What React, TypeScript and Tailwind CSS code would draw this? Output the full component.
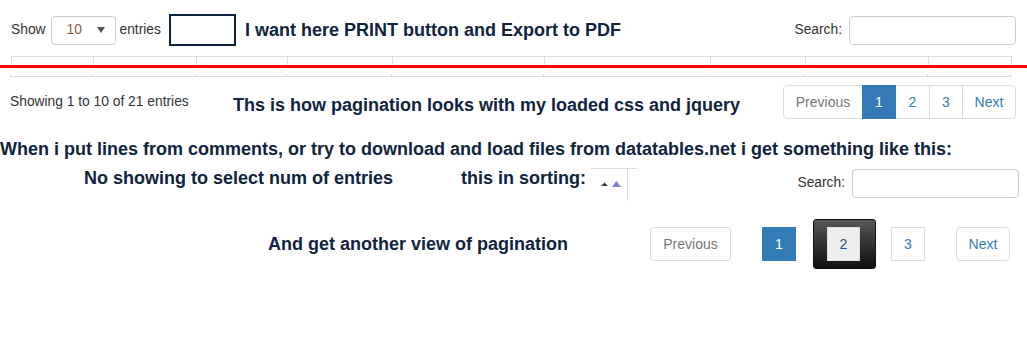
import React from 'react';

const colWidths = [82, 103, 91, 105, 152, 166, 95, 123, 84];

const TopCells = () => (
  <div className="flex px-[11px]">
    {colWidths.map((w, i) => (
      <div
        key={i}
        className={`h-[9px] border-t border-l border-[#dddddd] ${i === colWidths.length - 1 ? 'border-r' : ''}`}
        style={{ width: w }}
      />
    ))}
  </div>
);

const BottomCells = () => (
  <div className="flex px-[10px]">
    {colWidths.map((w, i) => (
      <div
        key={i}
        className={`h-[3px] border-b border-l border-[#dddddd] ${i === colWidths.length - 1 ? 'border-r' : ''}`}
        style={{ width: w }}
      />
    ))}
  </div>
);

const SortIcons = () => (
  <svg width="24" height="8" viewBox="0 0 24 8" className="block">
    <polygon points="1,6 4.5,2.5 8,6" fill="#333333" />
    <polygon points="12,7 16.5,1 21,7" fill="#7f7fe0" />
  </svg>
);

export default function App() {
  return (
    <div
      className="w-[1027px] h-[350px] bg-white text-[#333333] overflow-hidden"
      style={{ fontFamily: '"Liberation Sans", Arial, sans-serif' }}
    >
      {/* first toolbar */}
      <div className="flex items-center h-[32px] mt-[14px] pl-[11px] pr-[11px] text-[13.8px]">
        <span>Show</span>
        <div className="ml-[5px] w-[65px] h-[29px] border border-[#cccccc] rounded-[4px] flex items-center pl-[15px] pr-[5px]">
          <span className="text-[#8a6040]">10</span>
          <svg width="8" height="6" viewBox="0 0 8 6" className="ml-auto mr-[5px]">
            <polygon points="0,0 8,0 4,6" fill="#555555" />
          </svg>
        </div>
        <span className="ml-[4px]">entries</span>
        <div className="ml-[8px] w-[67px] h-[32px] border-2 border-[#0d2340]" />
        <span className="ml-[9px] text-[18px] font-bold text-[#102440] leading-[21px]">
          I want here PRINT button and Export to PDF
        </span>
        <div className="ml-auto flex items-center">
          <span>Search:</span>
          <div className="ml-[7px] w-[167px] h-[29px] border border-[#cccccc] rounded-[4px]" />
        </div>
      </div>

      {/* table head with the red line over it */}
      <div className="mt-[10px]">
        <TopCells />
        <div className="h-[3px] w-full bg-[#ff0000]" />
        <div className="h-[6px]" />
        <BottomCells />
      </div>

      {/* info + bootstrap pagination */}
      <div className="flex items-center h-[34px] mt-[8px] pl-[10px] pr-[11px] text-[13.8px]">
        <span className="w-[223px]">Showing 1 to 10 of 21 entries</span>
        <span className="pt-[6px] text-[18px] font-bold text-[#102440] leading-[21px]">
          Ths is how pagination looks with my loaded css and jquery
        </span>
        <div className="ml-auto flex h-[34px] border border-[#dddddd] rounded-[4px] text-[14px]">
          <div className="w-[78px] flex items-center justify-center text-[#777777]">Previous</div>
          <div className="w-[34px] h-[34px] -my-px flex items-center justify-center bg-[#337ab7] text-white">1</div>
          <div className="w-[33px] flex items-center justify-center text-[#337ab7]">2</div>
          <div className="w-[33px] border-l border-[#dddddd] flex items-center justify-center text-[#337ab7]">3</div>
          <div className="w-[53px] border-l border-[#dddddd] flex items-center justify-center text-[#337ab7]">Next</div>
        </div>
      </div>

      <p className="mt-[20px] text-[18px] font-bold text-[#102440] leading-[21px] whitespace-nowrap">
        When i put lines from comments, or try to download and load files from datatables.net i get something like this:
      </p>

      {/* second toolbar */}
      <div className="flex items-start h-[32px] mt-[8px] pl-[84px] pr-[8px]">
        <span className="w-[377px] text-[18px] font-bold text-[#102440] leading-[21px]">
          No showing to select num of entries
        </span>
        <span className="text-[18px] font-bold text-[#102440] leading-[21px]">this in sorting:</span>
        <div className="ml-[5px] w-[46px] border-t border-[#dddddd]">
          <div className="w-[37px] h-[32px] border-r border-[#dddddd] flex items-center pl-[9px] pb-[2px]">
            <SortIcons />
          </div>
        </div>
        <div className="ml-auto mt-[1px] flex items-center h-[29px] text-[13.8px]">
          <span>Search:</span>
          <div className="ml-[7px] w-[167px] h-[29px] border border-[#cccccc] rounded-[4px]" />
        </div>
      </div>

      {/* datatables pagination */}
      <div className="flex items-center h-[50px] mt-[19px] pl-[268px] text-[14px]">
        <span className="w-[382px] text-[18px] font-bold text-[#102440] leading-[21px]">
          And get another view of pagination
        </span>
        <div className="w-[81px] h-[34px] border border-[#dddddd] rounded-[4px] flex items-center justify-center text-[#777777]">
          Previous
        </div>
        <div className="ml-[31px] w-[34px] h-[34px] bg-[#337ab7] text-white flex items-center justify-center">1</div>
        <div className="ml-[17px] w-[63px] h-[50px] rounded-[3px] border border-[#111111] bg-gradient-to-b from-[#585858] to-[#111111] flex items-center pl-[13px]">
          <div className="w-[33px] h-[34px] bg-[#eeeeee] border border-[#dddddd] text-[#23527c] flex items-center justify-center">
            2
          </div>
        </div>
        <div className="ml-[15px] w-[34px] h-[34px] border border-[#dddddd] text-[#337ab7] flex items-center justify-center">3</div>
        <div className="ml-[31px] w-[54px] h-[34px] border border-[#dddddd] rounded-[4px] text-[#337ab7] flex items-center justify-center">
          Next
        </div>
      </div>
    </div>
  );
}
